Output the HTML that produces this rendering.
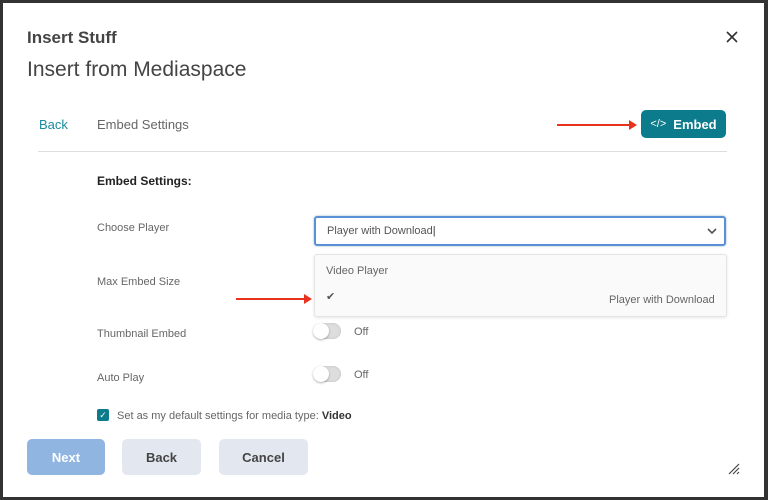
<!DOCTYPE html><html><head><style>
*{margin:0;padding:0;box-sizing:border-box}
body{width:768px;height:500px;background:#fff;font-family:"Liberation Sans",sans-serif;position:relative;overflow:hidden;color:#555}
.frame{position:absolute;left:0;top:0;width:768px;height:500px;border:3px solid #333;border-right-width:4px;border-bottom-width:3px}
.a{position:absolute;white-space:nowrap}
.btn{position:absolute;border-radius:5px;font-size:13px;font-weight:bold;display:flex;align-items:center;justify-content:center}
.tog{position:absolute;width:28px;height:16px;border-radius:8px;background:#ddd;box-shadow:inset 0 0 2px #bbb}
.tog::after{content:"";position:absolute;left:0;top:0;width:16px;height:16px;border-radius:50%;background:#fff;box-shadow:0 1px 2px rgba(0,0,0,.3)}
.lbl{font-size:11px;color:#666}
.arrow{position:absolute;height:2px;background:#e8321e}
.arrow::after{content:"";position:absolute;right:-2px;top:-4px;border-left:8px solid #e8321e;border-top:5px solid transparent;border-bottom:5px solid transparent}
</style></head><body>
<div class="frame"></div>
<div class="a" style="left:27px;top:28px;font-size:17px;font-weight:bold;color:#444">Insert Stuff</div>
<div class="a" style="left:27px;top:58px;font-size:21px;color:#444">Insert from Mediaspace</div>
<svg class="a" style="left:726px;top:31px" width="12" height="12"><path d="M1 1L11 11M11 1L1 11" stroke="#333" stroke-width="1.6"/></svg>
<div class="a" style="left:39px;top:117px;font-size:13px;color:#1a8a9e">Back</div>
<div class="a" style="left:97px;top:117px;font-size:13px;color:#666">Embed Settings</div>
<div class="arrow" style="left:557px;top:124px;width:78px"></div>
<div class="btn" style="left:641px;top:110px;width:85px;height:28px;background:#0c7b8c;color:#fff"><span style="font-weight:normal;font-size:11px;margin-right:7px">&lt;/&gt;</span>Embed</div>
<div class="a" style="left:38px;top:151px;width:689px;height:1px;background:#ddd"></div>
<div class="a" style="left:97px;top:174px;font-size:12px;font-weight:bold;color:#222">Embed Settings:</div>
<div class="a lbl" style="left:97px;top:222px">Choose Player</div>
<div class="a" style="left:314px;top:216px;width:412px;height:30px;border:2px solid #5b8fd6;border-radius:3px;box-shadow:0 0 2px #9bc"></div>
<div class="a" style="left:327px;top:225px;font-size:11px;color:#555">Player with Download<span style="color:#333">|</span></div>
<svg class="a" style="left:706px;top:226px" width="12" height="10"><path d="M2 3l4 4 4-4" stroke="#555" stroke-width="1.6" fill="none"/></svg>
<div class="a" style="left:314px;top:254px;width:413px;height:63px;background:#fafafa;border:1px solid #e4e4e4;border-radius:3px;box-shadow:0 1px 3px rgba(0,0,0,.1)"></div>
<div class="a" style="left:326px;top:265px;font-size:11px;color:#666">Video Player</div>
<div class="a" style="left:326px;top:290px;font-size:11px;color:#555">✔</div>
<div class="a" style="left:609px;top:294px;font-size:11px;color:#666">Player with Download</div>
<div class="a lbl" style="left:97px;top:276px">Max Embed Size</div>
<div class="arrow" style="left:236px;top:298px;width:74px"></div>
<div class="a lbl" style="left:97px;top:328px">Thumbnail Embed</div>
<div class="tog" style="left:313px;top:323px"></div>
<div class="a lbl" style="left:354px;top:326px">Off</div>
<div class="a lbl" style="left:97px;top:372px">Auto Play</div>
<div class="tog" style="left:313px;top:366px"></div>
<div class="a lbl" style="left:354px;top:369px">Off</div>
<div class="a" style="left:97px;top:409px;width:12px;height:12px;background:#0c7b8c;border-radius:2px;color:#fff;font-size:9px;text-align:center;line-height:12px">✓</div>
<div class="a lbl" style="left:117px;top:410px">Set as my default settings for media type: <b style="color:#333">Video</b></div>
<div class="btn" style="left:27px;top:439px;width:78px;height:36px;background:#8fb5e0;color:#fff">Next</div>
<div class="btn" style="left:122px;top:439px;width:79px;height:36px;background:#e3e8f0;color:#444">Back</div>
<div class="btn" style="left:219px;top:439px;width:89px;height:36px;background:#e3e8f0;color:#444">Cancel</div>
<svg class="a" style="left:728px;top:463px" width="12" height="12"><path d="M1 11L11 1M5 11L11 5M9 11L11 9" stroke="#444" stroke-width="1.2"/></svg>
</body></html>
